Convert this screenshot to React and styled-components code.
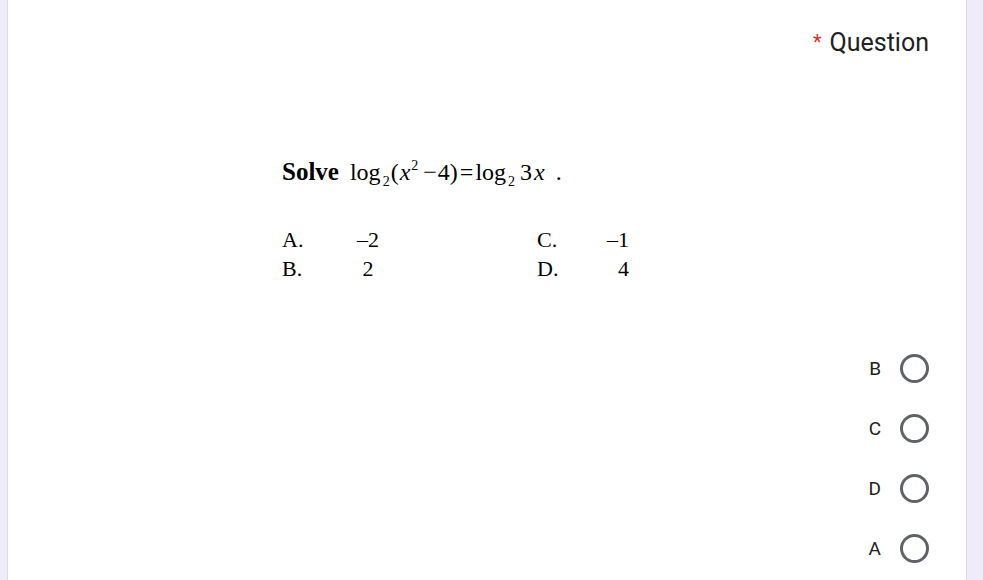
import React from "react";
import styled, { createGlobalStyle } from "styled-components";

const GlobalStyle = createGlobalStyle`
  html, body {
    margin: 0;
    padding: 0;
    background: #f0ebf8;
    height: 100%;
    overflow: hidden;
  }
  #root {
    height: 100%;
  }
`;

const Page = styled.div`
  height: 100%;
  padding-left: 7px;
  box-sizing: border-box;
`;

const Card = styled.div`
  width: 960px;
  height: 100%;
  box-sizing: border-box;
  background: #fff;
  border-left: 1px solid #dadce0;
  border-right: 1px solid #dadce0;
  padding: 25px 36px 0 36px;
  font-family: Roboto, "Noto Sans", sans-serif;
`;

const Title = styled.div`
  display: flex;
  justify-content: flex-end;
  align-items: baseline;
  font-size: 25px;
  line-height: 36px;
  color: #202124;
  padding-right: 1px;
`;

const Asterisk = styled.span`
  color: #d93025;
  font-size: 20px;
  margin-right: 8px;
  position: relative;
  top: -2px;
`;

const Figure = styled.div`
  display: flex;
  justify-content: center;
  margin-top: 95px;
`;

const MathBox = styled.div`
  width: 410px;
  font-family: "Liberation Serif", "Times New Roman", serif;
  color: #000;
`;

const MathLine = styled.div`
  font-size: 24px;
  line-height: 30px;
  white-space: nowrap;
`;

const Bold = styled.b`
  font-size: 25px;
  margin-right: 11px;
`;

const Sub = styled.span`
  font-size: 14px;
  position: relative;
  top: 6px;
  margin: 0 ${(p) => p.$right || 1}px 0 2px;
`;

const Sup = styled.span`
  font-size: 14px;
  position: relative;
  top: -10px;
  margin: 0 4px 0 1px;
`;

const Ital = styled.i`
  margin: 0 0 0 ${(p) => p.$left || 1}px;
`;

const Op = styled.span`
  margin: 0 ${(p) => p.$gap || 2}px;
`;

const Dot = styled.span`
  margin-left: 11px;
`;

const Choices = styled.div`
  display: grid;
  grid-template-columns: 61px 50px 144px 53px 39px;
  grid-auto-rows: 29px;
  margin-top: 34px;
  font-size: 22px;
  line-height: 29px;
`;

const Letter = styled.span``;

const Value = styled.span`
  text-align: ${(p) => p.$align || "center"};
`;

const Options = styled.div`
  display: flex;
  flex-direction: column;
  margin-top: 55px;
`;

const OptionRow = styled.label`
  display: flex;
  justify-content: flex-end;
  align-items: center;
  height: 60px;
  gap: 19px;
  padding-right: 1px;
`;

const OptionText = styled.span`
  font-size: 19px;
  color: #202124;
`;

const Radio = styled.span`
  width: 29px;
  height: 29px;
  box-sizing: border-box;
  border: 3px solid #5f6368;
  border-radius: 50%;
`;

const choices = ["B", "C", "D", "A"];

export default function App() {
  return (
    <>
      <GlobalStyle />
      <Page>
        <Card>
          <Title>
            <Asterisk>*</Asterisk>
            <span>Question</span>
          </Title>
          <Figure>
            <MathBox>
              <MathLine>
                <Bold>Solve</Bold>
                log<Sub>2</Sub>(<Ital>x</Ital>
                <Sup>2</Sup>
                <Op $gap={1}>−</Op>4)<Op $gap={2}>=</Op>log
                <Sub $right={5}>2</Sub>3<Ital $left={2}>x</Ital>
                <Dot>.</Dot>
              </MathLine>
              <Choices>
                <Letter>A.</Letter>
                <Value>–2</Value>
                <span />
                <Letter>C.</Letter>
                <Value $align="right">–1</Value>
                <Letter>B.</Letter>
                <Value>2</Value>
                <span />
                <Letter>D.</Letter>
                <Value $align="right">4</Value>
              </Choices>
            </MathBox>
          </Figure>
          <Options>
            {choices.map((c) => (
              <OptionRow key={c}>
                <OptionText>{c}</OptionText>
                <Radio />
              </OptionRow>
            ))}
          </Options>
        </Card>
      </Page>
    </>
  );
}
